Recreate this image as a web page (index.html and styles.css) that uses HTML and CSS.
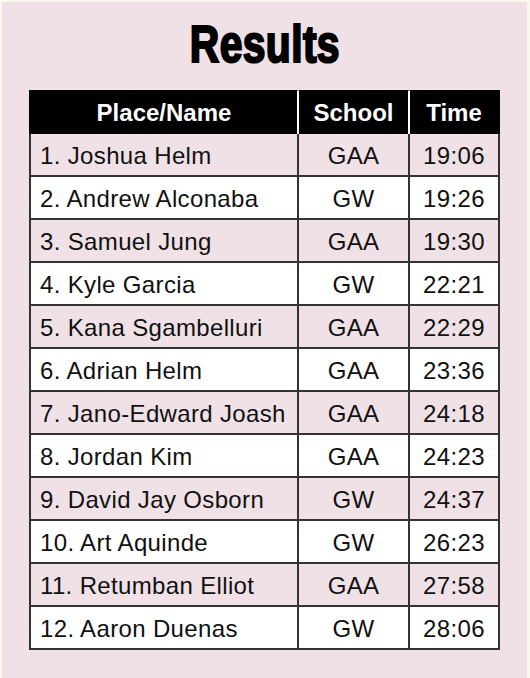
FILE: index.html
```html
<!DOCTYPE html>
<html lang="en">
<head>
<meta charset="utf-8">
<title>Results</title>
<link rel="stylesheet" href="styles.css">
</head>
<body>
<main class="panel">
  <h1 class="title"><span class="title-text">Results</span></h1>
  <div class="results" role="table">
    <div class="cell head" role="columnheader">Place/Name</div>
    <div class="cell head" role="columnheader">School</div>
    <div class="cell head" role="columnheader">Time</div>

    <div class="cell name odd">1. Joshua Helm</div><div class="cell mid odd">GAA</div><div class="cell mid odd">19:06</div>
    <div class="cell name">2. Andrew Alconaba</div><div class="cell mid">GW</div><div class="cell mid">19:26</div>
    <div class="cell name odd">3. Samuel Jung</div><div class="cell mid odd">GAA</div><div class="cell mid odd">19:30</div>
    <div class="cell name">4. Kyle Garcia</div><div class="cell mid">GW</div><div class="cell mid">22:21</div>
    <div class="cell name odd">5. Kana Sgambelluri</div><div class="cell mid odd">GAA</div><div class="cell mid odd">22:29</div>
    <div class="cell name">6. Adrian Helm</div><div class="cell mid">GAA</div><div class="cell mid">23:36</div>
    <div class="cell name odd">7. Jano-Edward Joash</div><div class="cell mid odd">GAA</div><div class="cell mid odd">24:18</div>
    <div class="cell name">8. Jordan Kim</div><div class="cell mid">GAA</div><div class="cell mid">24:23</div>
    <div class="cell name odd">9. David Jay Osborn</div><div class="cell mid odd">GW</div><div class="cell mid odd">24:37</div>
    <div class="cell name">10. Art Aquinde</div><div class="cell mid">GW</div><div class="cell mid">26:23</div>
    <div class="cell name odd">11. Retumban Elliot</div><div class="cell mid odd">GAA</div><div class="cell mid odd">27:58</div>
    <div class="cell name">12. Aaron Duenas</div><div class="cell mid">GW</div><div class="cell mid">28:06</div>
  </div>
</main>
</body>
</html>
```

FILE: styles.css
```css
html {
  background: #fbf7ef;
}
body {
  margin: 2px 3px 0 2px;
  background: #f0e1e6;
  min-height: 676px;
  font-family: "Liberation Sans", Arial, sans-serif;
  color: #111;
}
.panel {
  padding: 18px 27px 0 27px;
  display: flex;
  flex-direction: column;
  align-items: center;
}
.title {
  margin: 0 0 20px 0;
  font-size: 51px;
  line-height: 50px;
  height: 50px;
  font-weight: 700;
  color: #000;
  text-align: center;
}
.title-text {
  display: inline-block;
  transform: scaleX(0.8);
  -webkit-text-stroke: 2.2px #000;
  letter-spacing: 0.5px;
}
.results {
  display: grid;
  grid-template-columns: 270px 111px 90px;
  grid-template-rows: 44px;
  grid-auto-rows: 43px;
  width: 471px;
}
.cell {
  box-sizing: border-box;
  display: flex;
  align-items: center;
  padding-top: 2px;
  font-size: 24px;
  letter-spacing: 0.35px;
  border-right: 2px solid #333;
  border-bottom: 2px solid #333;
  background: #fff;
}
.cell.odd {
  background: #f0e1e6;
}
.name {
  border-left: 2px solid #333;
  padding-left: 9px;
  white-space: nowrap;
}
.mid {
  justify-content: center;
}
.head {
  background: #000;
  color: #fff;
  font-weight: 700;
  letter-spacing: 0;
  justify-content: center;
  padding-top: 0;
  border-top: 1px solid #000;
  border-bottom: 0;
  border-right: 2px solid #fff;
}
.head:first-child {
  border-left: 2px solid #000;
}
.head:nth-child(3) {
  border-right: 2px solid #000;
}
```
